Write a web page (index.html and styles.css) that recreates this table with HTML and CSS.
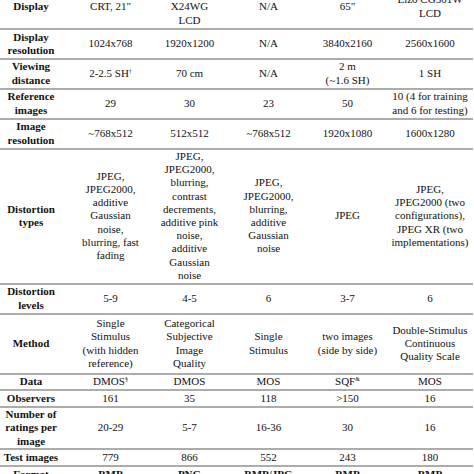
FILE: index.html
```html
<!DOCTYPE html>
<html>
<head>
<meta charset="utf-8">
<link rel="stylesheet" href="styles.css">
</head>
<body>
<div class="crop">
<table class="t">
<colgroup><col class="c1"><col class="cn"><col class="cn"><col class="cn"><col class="cn"><col class="c6"></colgroup>
<tr class="r44"><td class="l">Display</td><td>CRT, 21"</td><td class="down">X24WG<br>LCD</td><td>N/A</td><td>65"</td><td>Eizo CG301W<br>LCD</td></tr>
<tr class="r29"><td class="l">Display<br>resolution</td><td>1024x768</td><td>1920x1200</td><td>N/A</td><td>3840x2160</td><td>2560x1600</td></tr>
<tr class="r30"><td class="l">Viewing<br>distance</td><td>2-2.5 SH<sup>†</sup></td><td>70 cm</td><td>N/A</td><td>2 m<br>(~1.6 SH)</td><td>1 SH</td></tr>
<tr class="r30"><td class="l">Reference<br>images</td><td>29</td><td>30</td><td>23</td><td>50</td><td>10 (4 for training<br>and 6 for testing)</td></tr>
<tr class="r30"><td class="l">Image<br>resolution</td><td>~768x512</td><td>512x512</td><td>~768x512</td><td>1920x1080</td><td>1600x1280</td></tr>
<tr class="r135"><td class="l">Distortion<br>types</td><td>JPEG,<br>JPEG2000,<br>additive<br>Gaussian<br>noise,<br>blurring, fast<br>fading</td><td>JPEG,<br>JPEG2000,<br>blurring,<br>contrast<br>decrements,<br>additive pink<br>noise,<br>additive<br>Gaussian<br>noise</td><td>JPEG,<br>JPEG2000,<br>blurring,<br>additive<br>Gaussian<br>noise</td><td>JPEG</td><td>JPEG,<br>JPEG2000 (two<br>configurations),<br>JPEG XR (two<br>implementations)</td></tr>
<tr class="r30"><td class="l">Distortion<br>levels</td><td>5-9</td><td>4-5</td><td>6</td><td>3-7</td><td>6</td></tr>
<tr class="r60"><td class="l">Method</td><td>Single<br>Stimulus<br>(with hidden<br>reference)</td><td>Categorical<br>Subjective<br>Image<br>Quality</td><td>Single<br>Stimulus</td><td>two images<br>(side by side)</td><td>Double-Stimulus<br>Continuous<br>Quality Scale</td></tr>
<tr class="r16"><td class="l">Data</td><td>DMOS<sup>§</sup></td><td>DMOS</td><td>MOS</td><td>SQF<sup>&amp;</sup></td><td>MOS</td></tr>
<tr class="r17"><td class="l">Observers</td><td>161</td><td>35</td><td>118</td><td>&gt;150</td><td>16</td></tr>
<tr class="r42"><td class="l">Number of<br>ratings per<br>image</td><td>20-29</td><td>5-7</td><td>16-36</td><td>30</td><td>16</td></tr>
<tr class="r16"><td class="l">Test images</td><td>779</td><td>866</td><td>552</td><td>243</td><td>180</td></tr>
<tr class="r30 fmt"><td class="l">Format</td><td>BMP</td><td>PNG</td><td>BMP/JPG</td><td>BMP</td><td>BMP</td></tr>
</table>
</div>
</body>
</html>
```
FILE: styles.css
```css
html, body {
  margin: 0;
  padding: 0;
  background: #fff;
}
.crop {
  width: 474px;
  height: 474px;
  overflow: hidden;
}
.t {
  margin: -15px 0 0 -9px;
  border-collapse: collapse;
  table-layout: fixed;
  width: 482px;
  font-family: "Liberation Serif", "Times New Roman", serif;
  font-size: 11px;
  line-height: 13.2px;
  color: #111;
}
.c1 { width: 80px; }
.cn { width: 79px; }
.c6 { width: 86px; }
.t td {
  padding: 0;
  text-align: center;
  vertical-align: middle;
  border-bottom: 2px solid #acacac;
  white-space: nowrap;
}
.t td.l { font-weight: bold; }
.t td.down { padding-top: 14px; }
.fmt td { font-weight: bold; vertical-align: top; padding-top: 1px; }
sup {
  font-size: 6px;
  line-height: 0;
  vertical-align: 4px;
}
.r44 { height: 44px; }
.r29 { height: 29.5px; }
.r30 { height: 30px; }
.r135 { height: 135px; }
.r60 { height: 60px; }
.r16 { height: 16.5px; }
.r17 { height: 17px; }
.r42 { height: 42px; }
```
